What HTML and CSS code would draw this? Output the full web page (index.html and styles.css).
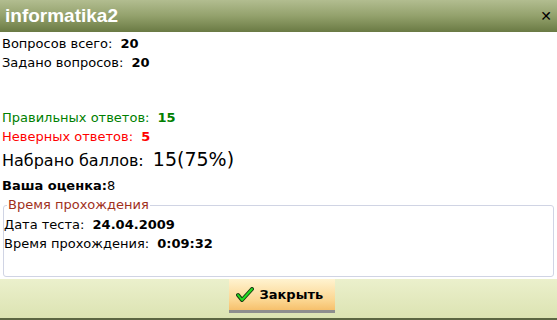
FILE: index.html
```html
<!DOCTYPE html>
<html lang="ru">
<head>
    <meta charset="UTF-8">
    <title>informatika2</title>
    <link rel="stylesheet" href="styles.css">
</head>
<body>
    <div class="window">
        <!-- Title bar -->
        <div class="title-bar">
            <span class="title">informatika2</span>
            <span class="close">&#x2715;</span>
        </div>

        <!-- Results -->
        <div class="results">
            <div class="row">Вопросов всего: <b>20</b></div>
            <div class="row">Задано вопросов: <b>20</b></div>
            <div class="row right gap-top">Правильных ответов: <b>15</b></div>
            <div class="row wrong">Неверных ответов: <b>5</b></div>
            <div class="row score">Набрано баллов: <span class="score-value">15(75%)</span></div>
            <div class="row mark"><b>Ваша оценка:</b>8</div>

            <fieldset class="time-box">
                <legend>Время прохождения</legend>
                <div class="row">Дата теста: <b>24.04.2009</b></div>
                <div class="row">Время прохождения: <b>0:09:32</b></div>
            </fieldset>
        </div>

        <!-- Bottom bar -->
        <div class="bottom-bar">
            <button class="close-btn">
                <svg width="18" height="16" viewBox="0 0 18 16">
                    <path d="M2 8 L6 13 L16 2" fill="none" stroke="#1a3a10" stroke-width="4" stroke-linecap="round" stroke-linejoin="round"/>
                    <path d="M2 8 L6 13 L16 2" fill="none" stroke="#22dd22" stroke-width="2" stroke-linecap="round" stroke-linejoin="round"/>
                </svg>
                <span>Закрыть</span>
            </button>
        </div>
    </div>
</body>
</html>
```

FILE: styles.css
```css
body {
    margin: 0;
    padding: 0;
    font-family: "DejaVu Sans", Verdana, sans-serif;
    font-size: 13px;
    color: #000;
    background: #fff;
}

.window {
    width: 557px;
    height: 320px;
    display: flex;
    flex-direction: column;
}

.title-bar {
    height: 32px;
    flex: none;
    display: flex;
    align-items: center;
    justify-content: space-between;
    padding: 0 5px 0 5px;
    background: linear-gradient(#b2bd90, #93a16c 50%, #6a7a44);
}

.title {
    font-family: "Liberation Sans", Arial, sans-serif;
    font-weight: bold;
    font-size: 19px;
    color: #fff;
}

.close {
    font-family: "DejaVu Sans", sans-serif;
    font-weight: bold;
    font-size: 14px;
    color: #000;
}

.results {
    flex: 1;
    padding: 2px 3px 0 2px;
}

.row {
    height: 19px;
    line-height: 19px;
    white-space: nowrap;
}

.row b {
    margin-left: 4px;
}

.gap-top {
    margin-top: 36px;
}

.right {
    color: #008000;
}

.wrong {
    color: #ff0000;
}

.score {
    height: 24px;
    line-height: 24px;
    font-size: 16px;
    margin-top: 1px;
}

.score-value {
    font-size: 19px;
    margin-left: 4px;
}

.mark {
    margin-top: 5px;
}

.mark b {
    margin-left: 0;
}

.time-box {
    margin: 3px 0 0 1px;
    padding: 3px 0 0 0;
    height: 79px;
    box-sizing: border-box;
    border: 1px solid #d0d4e4;
    border-radius: 3px;
}

.time-box legend {
    color: #a0301c;
    padding: 0 1px;
    margin-left: 3px;
    line-height: 14px;
}

.bottom-bar {
    height: 41px;
    flex: none;
    display: flex;
    justify-content: center;
    align-items: flex-start;
    background: linear-gradient(#ebf0cc, #dce3b2);
    border-bottom: 2px solid #5c6642;
    box-sizing: border-box;
}

.close-btn {
    width: 106px;
    height: 34px;
    margin-left: 6px;
    display: flex;
    align-items: center;
    gap: 6px;
    padding: 0 0 0 7px;
    border: none;
    border-bottom: 3px solid #8e8e8e;
    background: linear-gradient(#fff3d0, #fbd58f 70%, #f6c06c);
    font-family: "DejaVu Sans", Verdana, sans-serif;
    font-weight: bold;
    font-size: 13px;
    color: #000;
}
```
